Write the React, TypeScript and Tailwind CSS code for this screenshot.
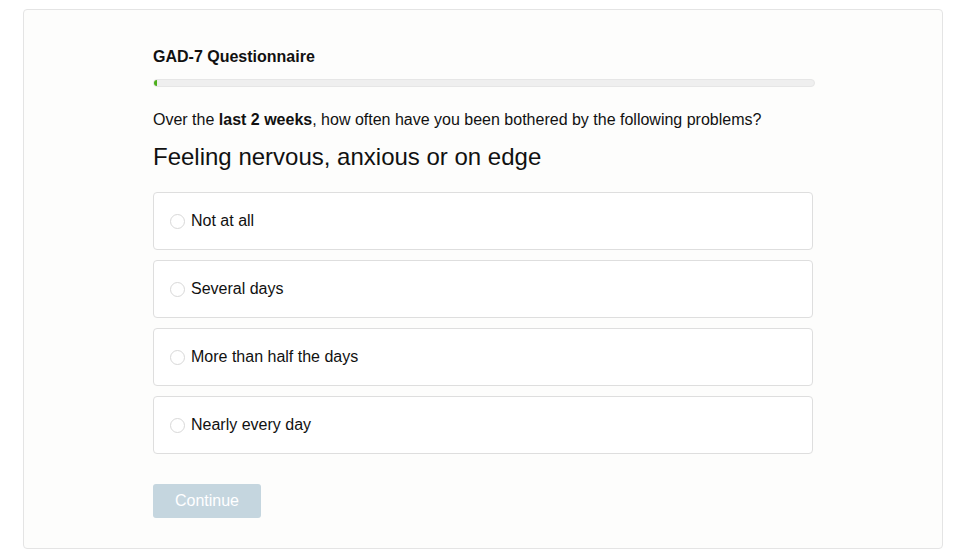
import { useState } from 'react';

const options = ['Not at all', 'Several days', 'More than half the days', 'Nearly every day'];

export default function App() {
  const [selected, setSelected] = useState<number | null>(null);

  return (
    <div className="min-h-[560px] bg-white pt-[9px] pl-[23px] font-['Liberation_Sans',Arial,sans-serif] text-[#111]">
      <div className="w-[920px] h-[540px] rounded border border-[#e4e4e4] bg-[#fdfdfc] pl-[129px] pt-[35px]">
        <div className="w-[662px]">
          <h1 className="text-base leading-6 font-bold">GAD-7 Questionnaire</h1>
          <div className="mt-[10px] h-[8px] w-[662px] rounded-full bg-[#efefef] border border-[#e6e6e6] overflow-hidden">
            <div className="h-full w-[3px] bg-[#4caf1a]" />
          </div>
          <p className="mt-[21px] text-base leading-6">
            Over the <span className="font-bold">last 2 weeks</span>, how often have you been bothered by the following problems?
          </p>
          <h2 className="mt-[9px] text-[24px] leading-8">Feeling nervous, anxious or on edge</h2>
          <div className="mt-[19px] flex flex-col gap-[10px] w-[660px]">
            {options.map((opt, i) => (
              <label
                key={opt}
                className="flex items-center h-[58px] rounded border border-[#dedede] bg-white pl-[16px] cursor-pointer"
                onClick={() => setSelected(i)}
              >
                <span
                  className={`w-[15px] h-[15px] rounded-full border ${selected === i ? 'border-[#4caf1a] bg-[#4caf1a]' : 'border-[#d8d8d8] bg-white'}`}
                />
                <span className="ml-[6px] text-base">{opt}</span>
              </label>
            ))}
          </div>
          <button
            className="mt-[30px] h-[34px] w-[108px] rounded-[3px] bg-[#c5d6df] text-white text-base"
            disabled={selected === null}
          >
            Continue
          </button>
        </div>
      </div>
    </div>
  );
}
